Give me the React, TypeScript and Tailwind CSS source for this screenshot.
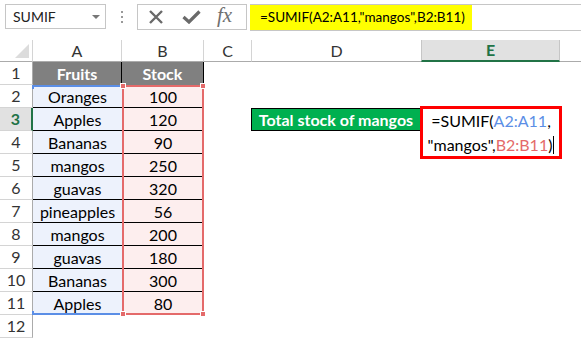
import React from 'react';

const data: [string, number][] = [
  ['Oranges', 100],
  ['Apples', 120],
  ['Bananas', 90],
  ['mangos', 250],
  ['guavas', 320],
  ['pineapples', 56],
  ['mangos', 200],
  ['guavas', 180],
  ['Bananas', 300],
  ['Apples', 80],
];

const font = { fontFamily: 'Lato, "Open Sans", sans-serif' };

const Handle = ({ className }: { className: string }) => (
  <div className={`absolute w-[6px] h-[6px] bg-[#e46a6a] border border-white ${className}`} />
);

const App = () => {
  return (
    <div className="w-[581px] h-[338px] bg-white overflow-hidden text-black" style={font}>
      {/* Formula bar */}
      <div className="flex items-start h-[40px] pt-[4px] pl-[5px]">
        <div className="w-[101px] h-[25px] border border-[#c6c6c6] flex items-center justify-between pl-[7px] pr-[4px] text-[14px] text-[#222]">
          <span>SUMIF</span>
          <svg width="10" height="6" viewBox="0 0 10 6">
            <path d="M1 1 L9 1 L5 5 Z" fill="#777" />
          </svg>
        </div>
        <div className="w-[31px] h-[25px] flex flex-col items-center justify-center gap-[3px]">
          <span className="w-[2px] h-[2px] bg-[#999]" />
          <span className="w-[2px] h-[2px] bg-[#999]" />
          <span className="w-[2px] h-[2px] bg-[#999]" />
        </div>
        <div className="w-[110px] h-[26px] border border-[#c6c6c6] flex items-center pl-[10px] gap-[18px]">
          <svg width="16" height="16" viewBox="0 0 16 16">
            <path d="M2 2 L14 14 M14 2 L2 14" stroke="#6a6a6a" strokeWidth="2.4" />
          </svg>
          <svg width="19" height="14" viewBox="0 0 19 14">
            <path d="M1.5 7 L7 12 L17.5 1.5" stroke="#6a6a6a" strokeWidth="3.2" fill="none" />
          </svg>
          <span
            className="text-[21px] italic text-[#707070] leading-none -mt-[3px] ml-[-2px]"
            style={{ fontFamily: '"Liberation Serif", serif' }}
          >
            fx
          </span>
        </div>
        <div className="flex-1 h-[27px] ml-[3px] border-y border-[#c6c6c6] flex">
          <div className="w-[222px] h-[25px] bg-[#ffff00] flex items-center pl-[10px] text-[13.5px] text-black">
            =SUMIF(A2:A11,"mangos",B2:B11)
          </div>
        </div>
      </div>

      {/* Sheet */}
      <div className="relative text-[16px]">
        {/* column headers */}
        <div className="flex h-[22px]">
          <div className="w-[33px] shrink-0 border-r border-b border-r-[#d4d4d4] border-b-[#ababab] flex items-end justify-end p-[3px]">
            <svg width="14" height="14" viewBox="0 0 14 14">
              <path d="M14 0 L14 14 L0 14 Z" fill="#dcdcdc" />
            </svg>
          </div>
          <div className="w-[89px] shrink-0 border-r border-b border-r-[#d4d4d4] border-b-[#ababab] flex items-center justify-center text-[#333]">
            A
          </div>
          <div className="w-[82px] shrink-0 border-r border-b border-r-[#d4d4d4] border-b-[#ababab] flex items-center justify-center text-[#333]">
            B
          </div>
          <div className="w-[48px] shrink-0 border-r border-b border-r-[#d4d4d4] border-b-[#ababab] flex items-center justify-center text-[#333]">
            C
          </div>
          <div className="w-[169px] shrink-0 border-b border-b-[#ababab] flex items-center justify-center text-[#333]">
            D
          </div>
          <div className="w-[139px] shrink-0 bg-[#e1e1e1] border-x border-x-[#c6c6c6] border-b-2 border-b-[#217346] flex items-center justify-center font-bold text-[#217346]">
            E
          </div>
          <div className="flex-1 border-b border-b-[#ababab]" />
        </div>

        {/* rows */}
        {Array.from({ length: 12 }, (_, i) => {
          const r = i + 1;
          const sel = r === 3;
          const item = r >= 2 && r <= 11 ? data[r - 2] : null;
          return (
            <div key={r} className="flex h-[23px]">
              <div
                className={
                  sel
                    ? 'w-[33px] shrink-0 bg-[#e1e1e1] border-r-2 border-r-[#217346] border-b border-b-[#d4d4d4] flex items-center justify-center font-bold text-[#217346]'
                    : 'w-[33px] shrink-0 border-r border-r-[#ababab] border-b border-b-[#d4d4d4] flex items-center justify-center text-[#333]'
                }
              >
                {r}
              </div>
              {r === 1 ? (
                <>
                  <div className="w-[89px] shrink-0 bg-[#808080] border-r border-r-black flex items-center justify-center font-bold text-white">
                    Fruits
                  </div>
                  <div className="w-[82px] shrink-0 bg-[#808080] border-r border-r-black flex items-center justify-center font-bold text-white">
                    Stock
                  </div>
                </>
              ) : item ? (
                <>
                  <div
                    className={`w-[89px] shrink-0 bg-[#edf2fc] flex items-center justify-center pt-[1px] ${r < 11 ? 'border-b border-b-black' : ''}`}
                  >
                    {item[0]}
                  </div>
                  <div
                    className={`w-[82px] shrink-0 bg-[#fdeeee] flex items-center justify-center pt-[1px] ${r < 11 ? 'border-b border-b-black' : ''}`}
                  >
                    {item[1]}
                  </div>
                </>
              ) : null}
              {r === 3 && (
                <div className="ml-[48px] -translate-x-[1px] w-[170px] shrink-0 bg-[#00b050] border border-black flex items-center justify-center font-bold text-white">
                  Total stock of mangos
                </div>
              )}
            </div>
          );
        })}

        {/* range highlight A2:A11 */}
        <div className="absolute left-[33px] top-[45px] w-[89px] h-[230px] border-y-2 border-[#5b8ee6] pointer-events-none">
          <div className="absolute -left-[1px] -top-[2px] w-[2px] h-[4px] bg-[#5b8ee6]" />
          <div className="absolute -left-[1px] -bottom-[2px] w-[2px] h-[4px] bg-[#5b8ee6]" />
        </div>
        {/* range highlight B2:B11 */}
        <div className="absolute left-[122px] top-[45px] w-[82px] h-[230px] border-2 border-[#e46a6a] pointer-events-none">
          <Handle className="-left-[4px] -top-[4px]" />
          <Handle className="-right-[4px] -top-[4px]" />
          <Handle className="-left-[4px] -bottom-[4px]" />
          <Handle className="-right-[4px] -bottom-[4px]" />
        </div>

        {/* in-cell editor E3 */}
        <div className="absolute left-[420px] top-[66px] w-[142px] h-[53px] bg-white border-[3px] border-[#ff0000] flex flex-col items-center justify-center text-[16px] leading-[24px] text-black">
          <div>
            =SUMIF(<span className="text-[#5b8ee6]">A2:A11</span>,
          </div>
          <div className="flex items-center">
            <span>
              "mangos",<span className="text-[#e46a6a]">B2:B11</span>)
            </span>
            <span className="inline-block w-[1px] h-[18px] bg-black ml-[1px]" />
          </div>
        </div>
      </div>
    </div>
  );
};

export default App;
